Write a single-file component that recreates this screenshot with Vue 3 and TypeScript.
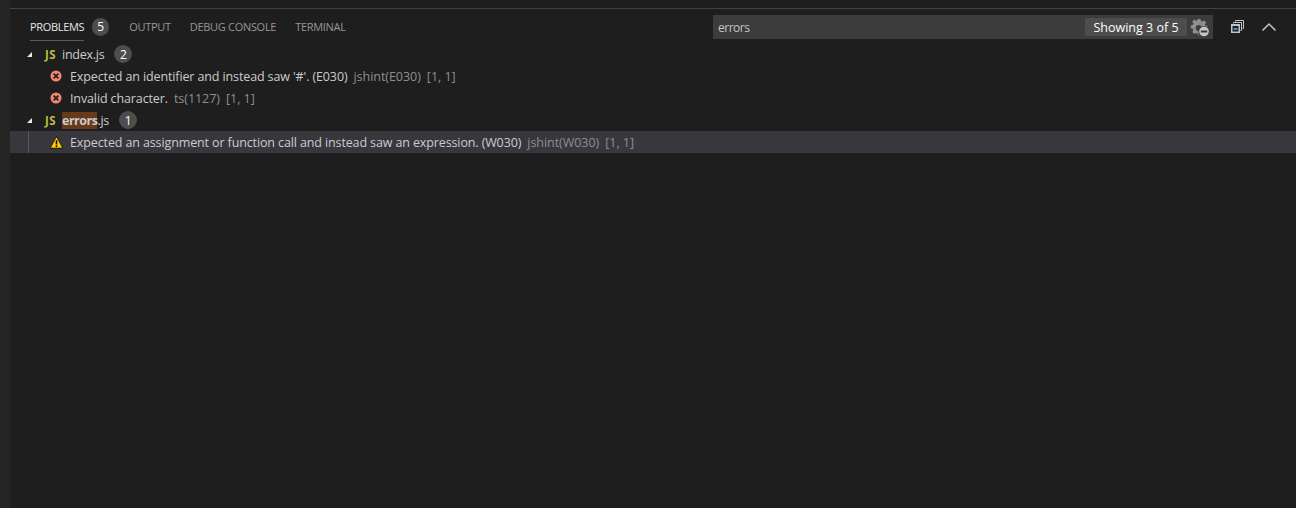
<script setup lang="ts">
interface Marker { kind: 'error' | 'warning'; msg: string; source: string; pos: string; selected?: boolean }
interface FileGroup { pre: string; rest: string; count: number; markers: Marker[] }
const tabs = ['OUTPUT', 'DEBUG CONSOLE', 'TERMINAL']
const groups: FileGroup[] = [
  { pre: '', rest: 'index.js', count: 2, markers: [
    { kind: 'error', msg: "Expected an identifier and instead saw '#'. (E030)", source: 'jshint(E030)', pos: '[1, 1]' },
    { kind: 'error', msg: 'Invalid character.', source: 'ts(1127)', pos: '[1, 1]' },
  ] },
  { pre: 'errors', rest: '.js', count: 1, markers: [
    { kind: 'warning', msg: 'Expected an assignment or function call and instead saw an expression. (W030)', source: 'jshint(W030)', pos: '[1, 1]', selected: true },
  ] },
]
</script>

<template>
  <div class="shell">
    <div class="strip"></div>
    <div class="panel">
      <header class="head">
        <nav class="tabs">
          <span class="tab active">PROBLEMS</span>
          <span class="count tabcount">5</span>
          <span v-for="t in tabs" :key="t" class="tab">{{ t }}</span>
        </nav>
        <div class="filter">
          <span class="query">errors</span>
          <span class="showing">Showing 3 of 5</span>
          <svg class="gear" width="20" height="20" viewBox="0 0 20 20">
            <path fill="#8e8e8e" d="M7.500 2h3l.4 2 1.500.6 1.800-1.100 2 2-1.100 1.800.6 1.500 2 .4v1.800h-6a3 3 0 1 0-3 3v4.500h-.700l-.4-2-1.500-.6-1.800 1.100-2-2 1.100-1.800-.6-1.500-2-.4v-3l2-.4.6-1.500-1.100-1.800 2-2 1.800 1.100 1.500-.6z"/>
            <circle cx="14" cy="14.500" r="5.500" fill="#3c3c3c"/>
            <circle cx="14" cy="14.500" r="4.800" fill="#c5c5c5"/>
            <rect x="10.800" y="13.500" width="6.400" height="2" fill="#3c3c3c"/>
          </svg>
        </div>
        <div class="actions">
          <svg width="16" height="16" viewBox="0 0 16 16">
            <path fill="none" stroke="#c5c5c5" d="M6.500 2.500V1.500h8v8h-1M4.500 4.500v-1h8v8h-1"/>
            <rect x="2" y="5" width="9" height="9" fill="#c5c5c5"/>
            <rect x="3.500" y="7" width="6" height="5.500" fill="#1e1e1e"/>
            <rect x="4.500" y="9" width="4" height="2" fill="#3794e6"/>
          </svg>
          <svg width="16" height="16" viewBox="0 0 16 16">
            <path fill="none" stroke="#c5c5c5" stroke-width="1.500" d="M1.500 11.500L8 5l6.500 6.500"/>
          </svg>
        </div>
      </header>

      <section class="tree">
        <template v-for="g in groups" :key="g.rest">
          <div class="row file">
            <span class="twistie"></span>
            <span class="js">JS</span>
            <span class="name"><mark v-if="g.pre" class="hit">{{ g.pre }}</mark>{{ g.rest }}</span>
            <span class="count">{{ g.count }}</span>
          </div>
          <div v-for="m in g.markers" :key="m.msg" class="row marker" :class="{ selected: m.selected }">
            <span v-if="m.selected" class="guide"></span>
            <svg v-if="m.kind === 'error'" class="sev" width="12" height="12" viewBox="0 0 12 12">
              <circle cx="6" cy="6" r="5.500" fill="#f48771"/>
              <path stroke="#1e1e1e" stroke-width="1.600" d="M3.600 3.600l4.800 4.800M8.400 3.600l-4.800 4.800"/>
            </svg>
            <svg v-else class="sev warn" width="13" height="13" viewBox="0 0 13 13">
              <path fill="#111" d="M6.500 0l6.500 12.500H0z"/>
              <path fill="#ffcc00" d="M6.500 1.200l5.600 10.600H.9z"/>
              <path fill="#111" d="M5.700 4.300h1.600v4.300H5.700zM5.700 9.300h1.600v1.600H5.700z"/>
            </svg>
            <span class="msg">{{ m.msg }}</span>
            <span class="src">{{ m.source }}</span>
            <span class="pos">{{ m.pos }}</span>
          </div>
        </template>
      </section>
    </div>
  </div>
</template>

<style>
html, body { margin: 0; background: #1e1e1e; }
</style>

<style scoped>
.shell {
  display: flex;
  width: 1296px;
  height: 508px;
  overflow: hidden;
  background: #1e1e1e;
  font-family: "Open Sans", "Noto Sans", sans-serif;
  color: #cccccc;
}
.strip { width: 10px; flex: none; background: #252526; }
.panel { flex: 1; min-width: 0; padding-top: 8px; }
.head {
  display: flex;
  align-items: center;
  height: 34px;
  border-top: 1px solid #414141;
}
.tabs { display: flex; align-items: center; width: 703px; padding-left: 20px; box-sizing: border-box; height: 100%; flex: none; }
.tab {
  font-size: 11px;
  letter-spacing: -0.3px;
  color: #969696;
  margin-right: 19px;
  padding-top: 2px;
  height: 32px;
  line-height: 32px;
  white-space: nowrap;
}
.tab.active {
  color: #e7e7e7;
  margin-right: 8px;
  letter-spacing: -0.33px;
  position: relative;
}
.tab.active::after {
  content: "";
  position: absolute;
  left: 0; right: 0; bottom: 2px;
  height: 1px;
  background: #5a5a5a;
}
.count {
  display: inline-flex;
  align-items: center;
  justify-content: center;
  min-width: 18px;
  height: 18px;
  border-radius: 9px;
  background: #4d4d4d;
  color: #fff;
  font-size: 12px;
}
.tabcount { min-width: 17px; margin-right: 20px; margin-top: 1px; }
.filter {
  display: flex;
  align-items: center;
  width: 500px;
  height: 24px;
  flex: none;
  background: #3c3c3c;
  box-sizing: border-box;
  padding: 0 3px 0 5px;
  margin-top: 2px;
}
.query { flex: 1; font-size: 12px; color: #c4c4c4; letter-spacing: -0.5px; }
.showing {
  width: 102px;
  height: 18px;
  line-height: 20px;
  background: #4d4d4d;
  border-radius: 2px;
  text-align: center;
  font-size: 12.500px;
  color: #fff;
}
.gear { margin-left: 3px; }
.actions { display: flex; align-items: center; gap: 16px; margin-left: 16px; margin-top: 2px; }
.tree { display: flex; flex-direction: column; }
.row {
  display: flex;
  align-items: center;
  height: 22px;
  font-size: 12.500px;
  letter-spacing: -0.12px;
  white-space: nowrap;
  position: relative;
}
.twistie {
  width: 0; height: 0;
  margin-left: 17px;
  border-left: 5px solid transparent;
  border-bottom: 5px solid #e8e8e8;
  margin-right: 12px;
}
.js { font-size: 11.500px; font-weight: 700; color: #bcbc3d; width: 18px; letter-spacing: 0.4px; padding-left: 1px; box-sizing: border-box; }
.name { margin-right: 10px; color: #cccccc; font-size: 12.500px; letter-spacing: -0.25px; }
.hit { background: #673a1b; color: #cccccc; font-weight: 700; letter-spacing: -0.5px; }
.marker { padding-left: 40px; }
.marker.selected { background: #37373d; }
.guide { position: absolute; left: 18px; top: 0; bottom: 0; width: 1px; background: #585858; }
.sev { margin-right: 8px; flex: none; }
.sev.warn { margin-right: 7px; }
.msg { margin-right: 6px; color: #cccccc; }
.src { margin-right: 6px; color: #8f8f8f; letter-spacing: -0.04px; }
.pos { color: #8f8f8f; letter-spacing: -0.04px; }
</style>
